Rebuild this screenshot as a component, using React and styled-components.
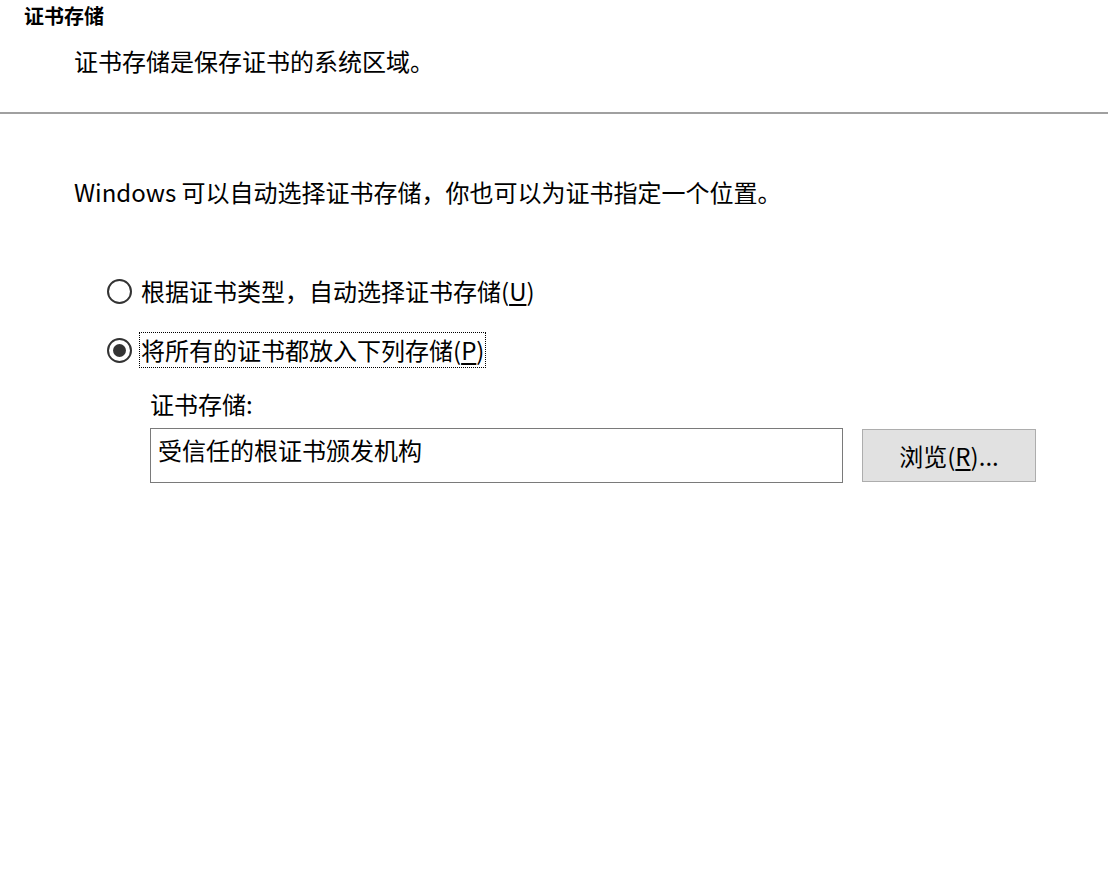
import React from 'react'
import styled, { createGlobalStyle } from 'styled-components'

const GlobalStyle = createGlobalStyle`
  html, body {
    margin: 0;
    padding: 0;
    background: #fff;
  }
  body {
    font-family: "Noto Sans CJK SC", "Noto Sans", sans-serif;
    color: #000;
  }
`

function Radio({ checked, focused, children }) {
  return (
    <Option>
      <RadioCircle checked={checked} />
      <OptionLabel focused={focused}>{children}</OptionLabel>
    </Option>
  )
}

function App() {
  return (
    <Page>
      <GlobalStyle />
      <Header>
        <Title>证书存储</Title>
        <Subtitle>证书存储是保存证书的系统区域。</Subtitle>
      </Header>

      <Body>
        <Intro>Windows 可以自动选择证书存储，你也可以为证书指定一个位置。</Intro>

        <Options>
          <Radio>根据证书类型，自动选择证书存储(<u>U</u>)</Radio>
          <Radio checked focused>将所有的证书都放入下列存储(<u>P</u>)</Radio>
        </Options>

        <Store>
          <FieldLabel>证书存储:</FieldLabel>
          <StoreRow>
            <TextBox>受信任的根证书颁发机构</TextBox>
            <Button>浏览(<u>R</u>)...</Button>
          </StoreRow>
        </Store>
      </Body>
    </Page>
  )
}

const Page = styled.div`
  width: 1110px;
  min-height: 882px;
  background: #fff;
`

const Header = styled.div`
  height: 112px;
  box-sizing: content-box;
  border-bottom: 2px solid #a0a0a0;
  padding-left: 24px;
  margin-right: 2px;
`

const Title = styled.div`
  font-size: 20px;
  font-weight: 700;
  line-height: 32px;
`

const Subtitle = styled.div`
  margin-top: 13px;
  margin-left: 50px;
  font-size: 24px;
  line-height: 32px;
`

const Body = styled.div`
  padding-left: 74px;
`

const Intro = styled.div`
  margin-top: 62px;
  font-size: 24px;
  line-height: 32px;
`

const Options = styled.div`
  margin-top: 65px;
  margin-left: 33px;
  display: flex;
  flex-direction: column;
  gap: 23px;
`

const Option = styled.div`
  display: flex;
  align-items: center;
  height: 36px;
  gap: 7px;
`

const RadioCircle = styled.span`
  width: 25px;
  height: 25px;
  box-sizing: border-box;
  border: 2px solid #333;
  border-radius: 50%;
  display: flex;
  align-items: center;
  justify-content: center;
  flex-shrink: 0;

  &::after {
    content: '';
    width: 13px;
    height: 13px;
    border-radius: 50%;
    background: #333;
    display: ${p => (p.checked ? 'block' : 'none')};
  }
`

const OptionLabel = styled.span`
  font-size: 24px;
  line-height: 32px;
  padding: 1px 1px;
  border: 1px dotted ${p => (p.focused ? '#000' : 'transparent')};

  u {
    text-underline-offset: 3px;
  }
`

const Store = styled.div`
  margin-top: 20px;
  margin-left: 76px;
`

const FieldLabel = styled.div`
  font-size: 24px;
  line-height: 32px;
`

const StoreRow = styled.div`
  margin-top: 8px;
  display: flex;
  align-items: flex-start;
  gap: 19px;
`

const TextBox = styled.div`
  width: 693px;
  height: 55px;
  box-sizing: border-box;
  border: 1px solid #7a7a7a;
  padding: 5px 7px 0;
  font-size: 24px;
  line-height: 32px;
`

const Button = styled.div`
  margin-top: 1px;
  width: 174px;
  height: 53px;
  box-sizing: border-box;
  background: #e1e1e1;
  border: 1px solid #adadad;
  display: flex;
  align-items: center;
  justify-content: center;
  font-size: 24px;
  line-height: 32px;

  u {
    text-underline-offset: 3px;
  }
`

export default App
